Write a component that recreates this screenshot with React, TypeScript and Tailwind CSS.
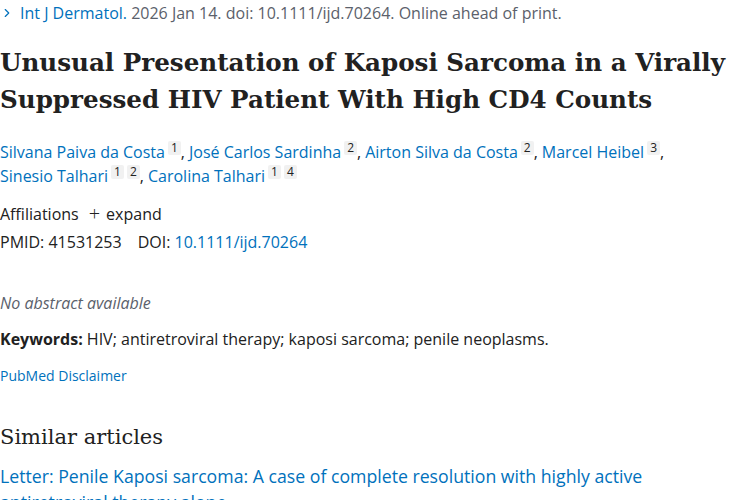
import { ChevronRight } from 'lucide-react'

const sans = "font-['Segoe_UI','Open_Sans','Noto_Sans',sans-serif]"
const serif = "font-['DejaVu_Serif','Liberation_Serif',serif]"

type Author = { name: string; refs: string[] }

const row1: Author[] = [
  { name: 'Silvana Paiva da Costa', refs: ['1'] },
  { name: 'José Carlos Sardinha', refs: ['2'] },
  { name: 'Airton Silva da Costa', refs: ['2'] },
  { name: 'Marcel Heibel', refs: ['3'] },
]
const row2: Author[] = [
  { name: 'Sinesio Talhari', refs: ['1', '2'] },
  { name: 'Carolina Talhari', refs: ['1', '4'] },
]

function Sup({ n }: { n: string }) {
  return (
    <span className="ml-[3px] inline-block rounded-[2px] bg-[#f1f1f1] px-[3px] text-[12px] leading-[14px] text-[#212121] align-[6px]">
      {n}
    </span>
  )
}

function AuthorLine({ authors, trailing }: { authors: Author[]; trailing?: boolean }) {
  return (
    <div className="leading-[24px]">
      {authors.map((a, i) => (
        <span key={a.name}>
          <a className="text-[#0071bc]">{a.name}</a>
          {a.refs.map((r) => (
            <Sup key={r} n={r} />
          ))}
          {(i < authors.length - 1 || trailing) && <span className="mr-[4px]">,</span>}
        </span>
      ))}
    </div>
  )
}

export default function App() {
  return (
    <div className={`w-[750px] h-[500px] overflow-hidden bg-white text-[#212121] ${sans} text-[16px]`}>
      <div className="flex items-center pt-[2px] leading-[22px] text-[#5b616b]">
        <ChevronRight className="w-[14px] h-[14px] text-[#0071bc] mr-[6px]" strokeWidth={2} />
        <span className="text-[#0071bc]">Int J Dermatol.</span>
        <span>&nbsp;2026 Jan 14. doi: 10.1111/ijd.70264. Online ahead of print.</span>
      </div>

      <h1 className={`${serif} mt-[20px] text-[24.6px] font-bold leading-[37px] text-[#212121]`}>
        Unusual Presentation of Kaposi Sarcoma in a Virally Suppressed HIV Patient With High CD4 Counts
      </h1>

      <div className="mt-[22px]">
        <AuthorLine authors={row1} trailing />
        <AuthorLine authors={row2} />
      </div>

      <div className="mt-[14px] flex items-center leading-[24px]">
        <span>Affiliations</span>
        <span className="ml-[10px] mr-[6px] text-[20px] font-light leading-[20px]">+</span>
        <span>expand</span>
      </div>
      <div className="mt-[4px] leading-[24px]">
        PMID: 41531253<span className="ml-[16px]">DOI: </span>
        <a className="text-[#0071bc]">10.1111/ijd.70264</a>
      </div>

      <div className="mt-[37px] italic text-[#5b616b] leading-[24px]">No abstract available</div>

      <div className="mt-[12px] leading-[24px]">
        <strong className="font-bold">Keywords:</strong> HIV; antiretroviral therapy; kaposi sarcoma; penile neoplasms.
      </div>

      <div className="mt-[15px] text-[14px] leading-[20px] text-[#0071bc]">PubMed Disclaimer</div>

      <h2 className={`${serif} mt-[36px] text-[21px] leading-[30px] text-[#212121]`}>Similar articles</h2>

      <div className="mt-[11px] text-[17.7px] leading-[26px] text-[#0071bc]">
        Letter: Penile Kaposi sarcoma: A case of complete resolution with highly active
        <br />
        antiretroviral therapy alone.
      </div>
    </div>
  )
}
